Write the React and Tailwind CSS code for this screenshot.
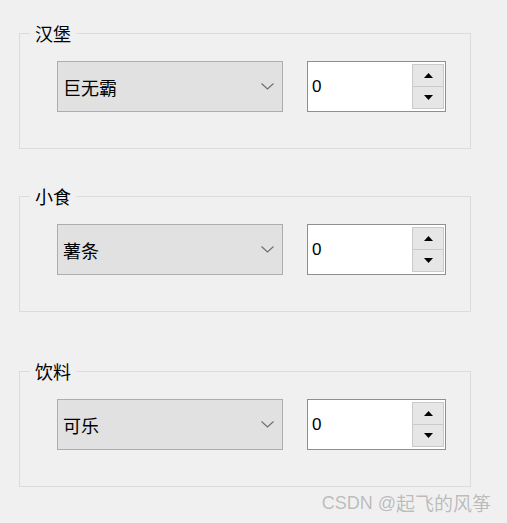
import React from "react";

const cjk = { fontFamily: '"Noto Sans CJK SC", "Noto Sans", sans-serif' };

const groups = [
  { title: "汉堡", item: "巨无霸", mt: "mt-[33px]" },
  { title: "小食", item: "薯条", mt: "mt-[47px]" },
  { title: "饮料", item: "可乐", mt: "mt-[59px]" },
];

const Chevron = () => (
  <svg width="13" height="7" viewBox="0 0 13 7" className="text-[#6d6d6d]">
    <path d="M0.5 0.5 L6.5 6 L12.5 0.5" fill="none" stroke="currentColor" strokeWidth="1.1" />
  </svg>
);

const SpinBox = () => (
  <div className="flex h-[51px] w-[139px] border border-[#8f8f8f] bg-white">
    <div className="flex flex-1 items-center pl-[4px] text-[17px] text-black" style={{ fontFamily: '"Liberation Sans", Arial, sans-serif' }}>
      0
    </div>
    <div className="my-[2px] mr-[1px] flex w-[32px] flex-col">
      <button className="flex flex-1 items-center justify-center border border-[#cacaca] bg-[#e6e6e6]">
        <svg width="9" height="5" viewBox="0 0 9 5">
          <path d="M0 5 L4.5 0 L9 5 Z" fill="#000" />
        </svg>
      </button>
      <button className="flex flex-1 items-center justify-center border border-t-0 border-[#cacaca] bg-[#e6e6e6]">
        <svg width="9" height="5" viewBox="0 0 9 5">
          <path d="M0 0 L9 0 L4.5 5 Z" fill="#000" />
        </svg>
      </button>
    </div>
  </div>
);

const Group = ({ title, item, mt }) => (
  <div className={`relative ${mt} h-[116px] w-[452px] border border-[#dcdcdc] pl-[37px] pt-[27px]`}>
    <span className="absolute left-[10px] top-[-11px] h-[20px] bg-[#f0f0f0] px-[5px] text-[18px] leading-[20px] text-black" style={cjk}>
      {title}
    </span>
    <div className="flex items-start gap-[24px]">
      <div className="flex h-[51px] w-[226px] items-center justify-between border border-[#adadad] bg-[#e1e1e1] pl-[5px] pr-[8px]">
        <span className="text-[18px] leading-none text-black" style={cjk}>{item}</span>
        <Chevron />
      </div>
      <SpinBox />
    </div>
  </div>
);

export default function App() {
  return (
    <div className="flex h-[523px] w-[507px] flex-col overflow-hidden bg-[#f0f0f0] pl-[19px]">
      {groups.map((g) => (
        <Group key={g.title} {...g} />
      ))}
      <div className="mt-[6px] flex items-center justify-end pr-[16px] text-[#bbbbbb]" style={{ textShadow: "0 0 1px #ffffff" }}>
        <span className="text-[18px] leading-[20px]" style={{ fontFamily: '"Liberation Sans", Arial, sans-serif' }}>CSDN @</span>
        <span className="text-[19px] leading-[20px]" style={cjk}>起飞的风筝</span>
      </div>
    </div>
  );
}
